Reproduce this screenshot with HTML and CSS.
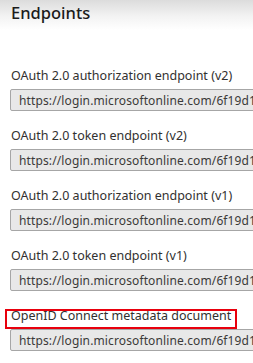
FILE: index.html
```html
<!DOCTYPE html>
<html lang="en">
<head>
  <meta charset="UTF-8">
  <meta name="viewport" content="width=device-width, initial-scale=1.0">
  <title>Endpoints</title>
  <link rel="stylesheet" href="styles.css">
</head>
<body>
  <div class="blade-header">
    <h1>Endpoints</h1>
  </div>

  <div class="endpoints">
    <div class="field">
      <label for="authV2">OAuth 2.0 authorization endpoint (v2)</label>
      <input type="text" id="authV2" readonly value="https://login.microsoftonline.com/6f19d1c4-2a7e-4b1f-9d3c-5e8a0b7f2c61/oauth2/v2.0/authorize">
    </div>

    <div class="field">
      <label for="tokenV2">OAuth 2.0 token endpoint (v2)</label>
      <input type="text" id="tokenV2" readonly value="https://login.microsoftonline.com/6f19d1c4-2a7e-4b1f-9d3c-5e8a0b7f2c61/oauth2/v2.0/token">
    </div>

    <div class="field">
      <label for="authV1">OAuth 2.0 authorization endpoint (v1)</label>
      <input type="text" id="authV1" readonly value="https://login.microsoftonline.com/6f19d1c4-2a7e-4b1f-9d3c-5e8a0b7f2c61/oauth2/authorize">
    </div>

    <div class="field">
      <label for="tokenV1">OAuth 2.0 token endpoint (v1)</label>
      <input type="text" id="tokenV1" readonly value="https://login.microsoftonline.com/6f19d1c4-2a7e-4b1f-9d3c-5e8a0b7f2c61/oauth2/token">
    </div>

    <div class="field">
      <label for="oidc" class="highlighted">OpenID Connect metadata document</label>
      <input type="text" id="oidc" readonly value="https://login.microsoftonline.com/6f19d1c4-2a7e-4b1f-9d3c-5e8a0b7f2c61/v2.0/.well-known/openid-configuration">
    </div>
  </div>
</body>
</html>
```

FILE: styles.css
```css
html, body {
  overflow: hidden;
}

body {
  font-family: 'Noto Sans', 'Open Sans', sans-serif;
  background: #fff;
  margin: 0;
  color: #323130;
}

.blade-header {
  background: linear-gradient(180deg, #dcdcdc 0%, #f3f3f3 55%, #fff 100%);
  height: 30px;
  padding: 0 11px;
}

h1 {
  margin: 0;
  padding-top: 1px;
  font-size: 16.5px;
  font-weight: 500;
  line-height: 24px;
  color: #1b1b1b;
}

.endpoints {
  padding: 36px 0 0 10px;
  overflow: hidden;
}

.field {
  display: flex;
  flex-direction: column;
  gap: 5px;
  margin-bottom: 15px;
}

label {
  display: block;
  position: relative;
  padding: 1px 0 0 1px;
  font-size: 12.5px;
  line-height: 17px;
}

.highlighted::after {
  content: "";
  position: absolute;
  left: -5px;
  top: 3px;
  width: 232px;
  height: 20px;
  box-sizing: border-box;
  border: 2px solid #e8000d;
}

input {
  width: 420px;
  height: 22px;
  box-sizing: border-box;
  padding: 0 8px;
  border: 1px solid #a6a6a6;
  border-radius: 2px;
  background: #e8e8e8;
  font-family: inherit;
  font-size: 12px;
  letter-spacing: 0.12px;
  color: #3b3a39;
  outline: none;
}
```
